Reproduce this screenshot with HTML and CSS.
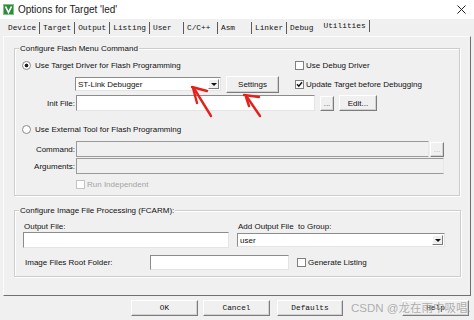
FILE: index.html
```html
<!DOCTYPE html>
<html lang="en">
<head>
    <meta charset="UTF-8">
    <title>Options for Target 'led'</title>
    <link rel="stylesheet" href="styles.css">
</head>
<body>
<div class="window">
    <div class="titlebar">
        <svg class="app-icon" width="11" height="11" viewBox="0 0 11 11">
            <rect x="0" y="0" width="11" height="11" fill="#2e8b3c"/>
            <rect x="0.5" y="0.5" width="10" height="10" fill="none" stroke="#7cc47f"/>
            <polyline points="2.5,2.5 5.5,8.5 8.5,2.5" fill="none" stroke="#fff" stroke-width="1.6"/>
        </svg>
        <span class="title">Options for Target 'led'</span>
        <svg class="close" width="9" height="9" viewBox="0 0 9 9">
            <line x1="0.5" y1="0.5" x2="8.5" y2="8.5" stroke="#222" stroke-width="1"/>
            <line x1="8.5" y1="0.5" x2="0.5" y2="8.5" stroke="#222" stroke-width="1"/>
        </svg>
    </div>

    <div class="tabs">
        <span class="tab tab-first">Device</span>
        <span class="tab">Target</span>
        <span class="tab">Output</span>
        <span class="tab">Listing</span>
        <span class="tab tab-wide">User</span>
        <span class="tab tab-wide">C/C++</span>
        <span class="tab tab-wide">Asm</span>
        <span class="tab">Linker</span>
        <span class="tab tab-last">Debug</span>
        <span class="tab tab-active">Utilities</span>
    </div>

    <div class="panel">
        <div class="group group-flash">
            <span class="group-title">Configure Flash Menu Command</span>

            <div class="row row-1">
                <div class="left">
                    <span class="radio checked"></span>
                    <span>Use Target Driver for Flash Programming</span>
                </div>
                <div class="right">
                    <span class="check"></span>
                    <span>Use Debug Driver</span>
                </div>
            </div>

            <div class="row row-2">
                <div class="left">
                    <div class="select select-driver">
                        <span class="select-text">ST-Link Debugger</span>
                        <span class="select-btn"><span class="tri"></span></span>
                    </div>
                    <span class="btn btn-settings">Settings</span>
                </div>
                <div class="right">
                    <span class="check checked">
                        <svg width="7" height="7" viewBox="0 0 7 7"><polyline points="1,3.2 2.8,5.2 6,1.2" fill="none" stroke="#111" stroke-width="1.5"/></svg>
                    </span>
                    <span>Update Target before Debugging</span>
                </div>
            </div>

            <div class="row row-3">
                <span class="field-label">Init File:</span>
                <span class="input input-init"></span>
                <span class="btn btn-dots">...</span>
                <span class="btn btn-edit">Edit...</span>
            </div>

            <div class="row row-4">
                <span class="radio"></span>
                <span>Use External Tool for Flash Programming</span>
            </div>

            <div class="row row-5">
                <span class="field-label">Command:</span>
                <span class="input disabled input-command"></span>
                <span class="btn btn-dots btn-disabled">...</span>
            </div>

            <div class="row row-6">
                <span class="field-label">Arguments:</span>
                <span class="input disabled input-args"></span>
            </div>

            <div class="row row-7">
                <span class="check check-disabled"></span>
                <span class="muted">Run Independent</span>
            </div>
        </div>

        <div class="group group-image">
            <span class="group-title">Configure Image File Processing (FCARM):</span>

            <div class="image-grid">
                <span class="grid-label">Output File:</span>
                <span class="grid-label">Add Output File&nbsp; to Group:</span>
                <span class="input input-output"></span>
                <div class="select select-group">
                    <span class="select-text">user</span>
                    <span class="select-btn"><span class="tri"></span></span>
                </div>
            </div>

            <div class="row row-root">
                <span class="root-label">Image Files Root Folder:</span>
                <span class="input input-root"></span>
                <span class="check"></span>
                <span>Generate Listing</span>
            </div>
        </div>
    </div>

    <div class="buttons">
        <span class="btn btn-main btn-ok">OK</span>
        <span class="btn btn-main">Cancel</span>
        <span class="btn btn-main btn-defaults">Defaults</span>
        <span class="btn btn-main btn-help">Help</span>
    </div>

    <svg class="marks" width="474" height="320" viewBox="0 0 474 320">
        <g fill="none" stroke="#e3221d" stroke-width="2.4" stroke-linecap="round" stroke-linejoin="round">
            <path d="M192 87 L207 91"/>
            <path d="M193 88 L197 103"/>
            <path d="M195 90 L211 116"/>
            <path d="M244 95 L259 97"/>
            <path d="M246 97 L249 106"/>
            <path d="M247 97 L260 116"/>
        </g>
    </svg>
    <span class="watermark">CSDN @龙在雨中吸唱.</span>
</div>
</body>
</html>
```

FILE: styles.css
```css
body {
    margin: 0;
    background-color: #f0f0f0;
    font-family: "Liberation Sans", Arial, sans-serif;
    font-size: 8px;
    color: #111;
}
.window {
    position: relative;
    width: 474px;
    height: 320px;
    overflow: hidden;
    background-color: #f0f0f0;
}

/* title bar */
.titlebar {
    height: 19px;
    background-color: #fff;
    display: flex;
    align-items: center;
}
.app-icon {
    margin-left: 3px;
    margin-right: 4px;
}
.title {
    font-size: 10px;
    color: #1a1a1a;
    flex: 1;
}
.close {
    margin-right: 8px;
}

/* tabs */
.tabs {
    height: 17px;
    display: flex;
    align-items: center;
    padding-left: 5px;
    font-family: "Liberation Mono", "Courier New", monospace;
    font-size: 7.8px;
}
.tab {
    height: 12px;
    line-height: 12px;
    padding: 0 3px;
    border-left: 1px solid #5a5a5a;
}
.tab-first {
    border-left: none;
}
.tab-wide {
    min-width: 27px;
}
.tab-last {
    padding-right: 6px;
}
.tab-active {
    border-left: none;
    border-right: 1px solid #5a5a5a;
    padding-left: 4px;
    margin-bottom: 4px;
}

/* main panel */
.panel {
    margin: 0 3px 0 3px;
    border: 1px solid;
    border-color: #fbfbfb #707070 #707070 #fbfbfb;
    padding: 11px 0 18px 10px;
}
.group {
    position: relative;
    width: 446px;
    box-sizing: border-box;
    border: 1px solid #cdcdcd;
    box-shadow: inset 1px 1px #fff, 1px 1px #fff;
}
.group-title {
    position: absolute;
    top: -6px;
    left: 4px;
    padding: 0 1px;
    line-height: 11px;
    background-color: #f0f0f0;
}
.group-flash {
    padding: 10px 0 5px 0;
}
.group-image {
    width: 447px;
    margin-top: 14px;
    padding: 10px 0 6px 0;
}

.row {
    display: flex;
    align-items: center;
    white-space: nowrap;
}
.left {
    width: 280px;
    display: flex;
    align-items: center;
}
.right {
    display: flex;
    align-items: center;
}
.row-1 {
    height: 12px;
}
.row-2 {
    height: 18px;
    margin-top: 4px;
}
.row-3 {
    height: 16px;
    margin-top: 2px;
}
.row-4 {
    height: 12px;
    margin-top: 12px;
}
.row-5 {
    height: 16px;
    margin-top: 6px;
}
.row-6 {
    height: 16px;
    margin-top: 1px;
}
.row-7 {
    height: 12px;
    margin-top: 4px;
}

/* radio & checkbox */
.radio {
    width: 7px;
    height: 7px;
    border: 1px solid #8a8a8a;
    border-radius: 50%;
    background-color: #fff;
    margin-left: 7px;
    margin-right: 4px;
}
.radio.checked {
    background: radial-gradient(circle, #222 0 1.6px, #fff 2.2px);
}
.check {
    width: 7px;
    height: 7px;
    border: 1px solid #808080;
    background-color: #fff;
    margin-right: 2px;
    display: flex;
}
.check-disabled {
    border-color: #c2c2c2;
    margin-left: 61px;
}
.muted {
    color: #a4a4a4;
}

/* inputs */
.input {
    box-sizing: border-box;
    height: 16px;
    background-color: #fff;
    border: 1px solid;
    border-color: #8c8c8c #e4e4e4 #e4e4e4 #8c8c8c;
}
.input.disabled {
    background-color: #f0f0f0;
    border-color: #9a9a9a #e8e8e8 #9a9a9a #9a9a9a;
}
.field-label {
    width: 60px;
    text-align: right;
    margin-right: 1px;
}
.input-init {
    width: 239px;
}
.input-command {
    width: 353px;
}
.input-args {
    width: 368px;
}

.select {
    box-sizing: border-box;
    height: 14px;
    background-color: #fff;
    border: 1px solid;
    border-color: #8c8c8c #e4e4e4 #e4e4e4 #8c8c8c;
    display: flex;
    align-items: center;
}
.select-text {
    flex: 1;
    padding-left: 2px;
}
.select-btn {
    width: 11px;
    height: 10px;
    margin-right: 1px;
    box-sizing: border-box;
    background-color: #f0f0f0;
    border: 1px solid;
    border-color: #fff #7a7a7a #7a7a7a #fff;
    display: flex;
    align-items: center;
    justify-content: center;
}
.tri {
    width: 0;
    height: 0;
    border-left: 3px solid transparent;
    border-right: 3px solid transparent;
    border-top: 3px solid #111;
}
.select-driver {
    width: 146px;
    margin-left: 60px;
}

/* buttons */
.btn {
    box-sizing: border-box;
    height: 16px;
    background-color: #f0f0f0;
    border: 1px solid;
    border-color: #fff #7c7c7c #7c7c7c #fff;
    box-shadow: inset -1px -1px #d2d2d2;
    display: flex;
    align-items: center;
    justify-content: center;
}
.btn-settings {
    width: 53px;
    height: 17px;
    margin-left: 5px;
}
.btn-dots {
    width: 14px;
    height: 15px;
    margin-left: 5px;
    color: #555;
}
.btn-disabled {
    margin-left: 1px;
    color: #b0b0b0;
}
.btn-edit {
    width: 38px;
    margin-left: 5px;
}

/* image processing group */
.image-grid {
    display: grid;
    grid-template-columns: 206px 208px;
    grid-template-rows: 10px 16px;
    column-gap: 8px;
    row-gap: 1px;
    margin-left: 8px;
    align-items: center;
}
.grid-label {
    padding-left: 1px;
}
.input-output {
    width: 206px;
}
.select-group {
    width: 208px;
}
.row-root {
    height: 16px;
    margin-top: 6px;
}
.root-label {
    width: 135px;
    padding-left: 10px;
    box-sizing: border-box;
}
.input-root {
    width: 139px;
    height: 15px;
    margin-right: 8px;
}

/* bottom buttons */
.buttons {
    display: flex;
    height: 16px;
    margin-top: 4px;
    padding-left: 131px;
    font-family: "Liberation Mono", "Courier New", monospace;
    font-size: 7.8px;
}
.btn-main {
    width: 67px;
    margin-right: 5px;
}
.btn-defaults {
    margin-left: 2px;
    width: 66px;
}
.btn-help {
    margin-left: 54px;
}

/* overlays */
.marks {
    position: absolute;
    left: 0;
    top: 0;
    pointer-events: none;
}
.watermark {
    position: absolute;
    left: 351px;
    top: 300px;
    font-family: "Liberation Sans", "Noto Sans CJK SC", sans-serif;
    font-size: 11.5px;
    line-height: 16px;
    color: rgba(160, 160, 160, 0.85);
    white-space: nowrap;
}
```
